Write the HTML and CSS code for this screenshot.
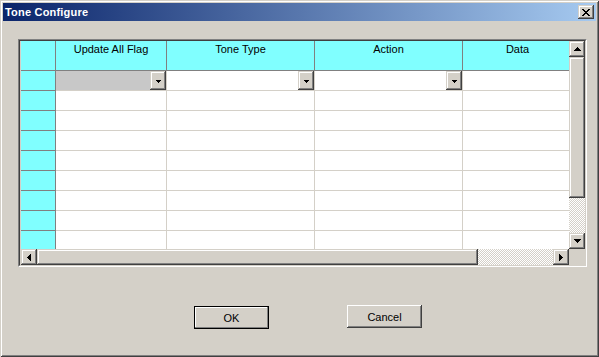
FILE: index.html
```html
<!DOCTYPE html>
<html>
<head>
<meta charset="utf-8">
<title>Tone Configure</title>
<link rel="stylesheet" href="styles.css">
</head>
<body>
<div class="window">
  <div class="titlebar">
    <span class="title">Tone Configure</span>
    <div class="closebtn raised">
      <svg width="8" height="7" viewBox="0 0 8 7" shape-rendering="crispEdges"><path d="M0 0h2v1H0zM6 0h2v1H6zM1 1h2v1H1zM5 1h2v1H5zM2 2h4v1H2zM3 3h2v1H3zM2 4h4v1H2zM1 5h2v1H1zM5 5h2v1H5zM0 6h2v1H0zM6 6h2v1H6z" fill="#000"/></svg>
    </div>
  </div>
  <div class="gridframe">
    <div class="gridinner">
      <div class="cells">
        <div class="row header">
          <div class="cell rh"></div>
          <div class="cell c1">Update All Flag</div>
          <div class="cell c2">Tone Type</div>
          <div class="cell c3">Action</div>
          <div class="cell c4">Data</div>
        </div>
        <div class="row">
          <div class="cell rh"></div>
          <div class="cell c1 combo disabled"><div class="dropbtn raised"><svg width="5" height="3" viewBox="0 0 5 3" shape-rendering="crispEdges"><path d="M0 0h5v1H0zM1 1h3v1H1zM2 2h1v1H2z" fill="#000"/></svg></div></div>
          <div class="cell c2 combo"><div class="dropbtn raised"><svg width="5" height="3" viewBox="0 0 5 3" shape-rendering="crispEdges"><path d="M0 0h5v1H0zM1 1h3v1H1zM2 2h1v1H2z" fill="#000"/></svg></div></div>
          <div class="cell c3 combo"><div class="dropbtn raised"><svg width="5" height="3" viewBox="0 0 5 3" shape-rendering="crispEdges"><path d="M0 0h5v1H0zM1 1h3v1H1zM2 2h1v1H2z" fill="#000"/></svg></div></div>
          <div class="cell c4"></div>
        </div>
        <div class="row"><div class="cell rh"></div><div class="cell c1"></div><div class="cell c2"></div><div class="cell c3"></div><div class="cell c4"></div></div>
        <div class="row"><div class="cell rh"></div><div class="cell c1"></div><div class="cell c2"></div><div class="cell c3"></div><div class="cell c4"></div></div>
        <div class="row"><div class="cell rh"></div><div class="cell c1"></div><div class="cell c2"></div><div class="cell c3"></div><div class="cell c4"></div></div>
        <div class="row"><div class="cell rh"></div><div class="cell c1"></div><div class="cell c2"></div><div class="cell c3"></div><div class="cell c4"></div></div>
        <div class="row"><div class="cell rh"></div><div class="cell c1"></div><div class="cell c2"></div><div class="cell c3"></div><div class="cell c4"></div></div>
        <div class="row"><div class="cell rh"></div><div class="cell c1"></div><div class="cell c2"></div><div class="cell c3"></div><div class="cell c4"></div></div>
        <div class="row"><div class="cell rh"></div><div class="cell c1"></div><div class="cell c2"></div><div class="cell c3"></div><div class="cell c4"></div></div>
        <div class="row"><div class="cell rh"></div><div class="cell c1"></div><div class="cell c2"></div><div class="cell c3"></div><div class="cell c4"></div></div>
      </div>
      <div class="vscroll">
        <div class="sbtn raised"><svg width="7" height="4" viewBox="0 0 7 4" shape-rendering="crispEdges"><path d="M3 0h1v1H3zM2 1h3v1H2zM1 2h5v1H1zM0 3h7v1H0z" fill="#000"/></svg></div>
        <div class="vthumb raised"></div>
        <div class="track"></div>
        <div class="sbtn raised"><svg width="7" height="4" viewBox="0 0 7 4" shape-rendering="crispEdges"><path d="M0 0h7v1H0zM1 1h5v1H1zM2 2h3v1H2zM3 3h1v1H3z" fill="#000"/></svg></div>
      </div>
      <div class="hscroll">
        <div class="sbtn raised"><svg width="4" height="7" viewBox="0 0 4 7" shape-rendering="crispEdges"><path d="M3 0h1v7H3zM2 1h1v5H2zM1 2h1v3H1zM0 3h1v1H0z" fill="#000"/></svg></div>
        <div class="hthumb raised"></div>
        <div class="track"></div>
        <div class="sbtn raised"><svg width="4" height="7" viewBox="0 0 4 7" shape-rendering="crispEdges"><path d="M0 0h1v7H0zM1 1h1v5H1zM2 2h1v3H2zM3 3h1v1H3z" fill="#000"/></svg></div>
      </div>
      <div class="corner"></div>
    </div>
  </div>
  <div class="buttons">
    <div class="btn default">OK</div>
    <div class="btn">Cancel</div>
  </div>
</div>
</body>
</html>
```

FILE: styles.css
```css
html, body {
  margin: 0;
  padding: 0;
}
body {
  width: 599px;
  height: 357px;
  overflow: hidden;
  background: #d4d0c8;
  font-family: "Liberation Sans", Arial, sans-serif;
  font-size: 11px;
  color: #000;
}
.window {
  box-sizing: border-box;
  width: 599px;
  height: 357px;
  padding: 3px;
  background: #d4d0c8;
  box-shadow: inset 1px 1px #d4d0c8, inset -1px -1px #404040, inset 2px 2px #fff, inset -2px -2px #808080;
}
.titlebar {
  height: 18px;
  display: flex;
  align-items: center;
  justify-content: space-between;
  padding-left: 2px;
  background: linear-gradient(to right, #0a246a, #a6caf0);
}
.title {
  color: #fff;
  font-weight: bold;
  font-size: 11px;
  line-height: 18px;
  letter-spacing: 0.2px;
}
.raised {
  box-sizing: border-box;
  background: #d4d0c8;
  box-shadow: inset -1px -1px #404040, inset 1px 1px #d4d0c8, inset -2px -2px #808080, inset 2px 2px #fff;
}
.closebtn {
  width: 16px;
  height: 14px;
  margin-right: 2px;
  display: flex;
  align-items: center;
  justify-content: center;
}
.closebtn svg {
  margin-left: -1px;
}
.gridframe {
  box-sizing: border-box;
  width: 569px;
  height: 228px;
  margin: 18px 0 0 15px;
  border: 1px solid;
  border-color: #808080 #fff #fff #808080;
}
.gridinner {
  box-sizing: border-box;
  height: 100%;
  border: 1px solid;
  border-color: #404040 #d4d0c8 #d4d0c8 #404040;
  padding-left: 1px;
  background: #d4d0c8;
  display: grid;
  grid-template-columns: 548px 16px;
  grid-template-rows: 208px 16px;
}
.cells {
  overflow: hidden;
  background: #fff;
}
.row {
  display: flex;
  height: 20px;
}
.row.header {
  height: 30px;
}
.cell {
  box-sizing: border-box;
  flex: none;
  height: 100%;
  border-right: 1px solid #d4d0c8;
  border-bottom: 1px solid #d4d0c8;
  background: #fff;
}
.cell.rh {
  width: 35px;
  background: #80ffff;
  border-color: #808080;
}
.c1 { width: 111px; }
.c2 { width: 148px; }
.c3 { width: 148px; }
.c4 { width: 110px; }
.header .cell {
  background: #80ffff;
  border-color: #808080;
  text-align: center;
  line-height: 13px;
  padding-top: 2px;
}
.combo {
  display: flex;
  justify-content: flex-end;
}
.combo.disabled {
  background: #c8c8c8;
}
.dropbtn {
  width: 16px;
  height: 19px;
  display: flex;
  align-items: center;
  justify-content: center;
}
.dropbtn svg {
  margin-top: 1px;
}
.vscroll {
  display: flex;
  flex-direction: column;
}
.hscroll {
  display: flex;
}
.sbtn {
  flex: none;
  width: 16px;
  height: 16px;
  display: flex;
  align-items: center;
  justify-content: center;
}
.vthumb {
  flex: none;
  height: 141px;
}
.hthumb {
  flex: none;
  width: 441px;
}
.track {
  flex: 1;
  background-color: #fff;
  background-image: conic-gradient(#fff 25%, #d4d0c8 0 50%, #fff 0 75%, #d4d0c8 0);
  background-size: 2px 2px;
}
.corner {
  background: #d4d0c8;
}
.buttons {
  display: flex;
  align-items: flex-start;
  margin: 38px 0 0 191px;
  gap: 78px;
}
.btn {
  box-sizing: border-box;
  width: 75px;
  height: 23px;
  display: flex;
  align-items: center;
  justify-content: center;
  background: #d4d0c8;
  box-shadow: inset -1px -1px #404040, inset 1px 1px #fff, inset -2px -2px #808080, inset 2px 2px #d4d0c8;
}
.btn.default {
  margin-top: 1px;
  box-shadow: inset 0 0 0 1px #000, inset -2px -2px #808080, inset 2px 2px #fff;
}
```
